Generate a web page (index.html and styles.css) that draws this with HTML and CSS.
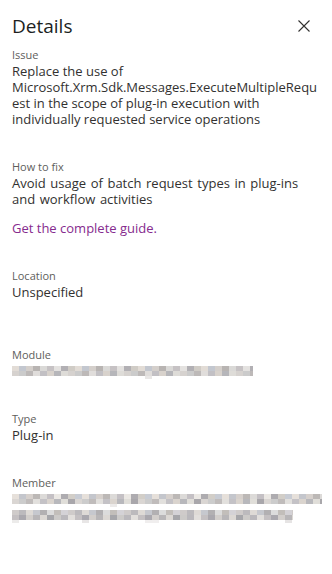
FILE: index.html
```html
<!DOCTYPE html>
<html lang="en">
<head>
<meta charset="utf-8">
<title>Details</title>
<link rel="stylesheet" href="styles.css">
</head>
<body>
<div class="panel">
  <div class="header">
    <h1 class="title">Details</h1>
    <button class="close" aria-label="Close">
      <svg width="12" height="12" viewBox="0 0 12 12"><path d="M0.5 0.5 L11.5 11.5 M11.5 0.5 L0.5 11.5" stroke="#323130" stroke-width="1.1" fill="none"/></svg>
    </button>
  </div>
  <div class="section first">
    <div class="label">Issue</div>
    <div class="value">Replace the use of Microsoft.Xrm.Sdk.Messages.ExecuteMultipleRequest in the scope of plug-in execution with individually requested service operations</div>
  </div>
  <div class="section">
    <div class="label">How to fix</div>
    <div class="value fix">Avoid usage of batch request types in plug-ins and workflow activities</div>
    <a class="link" href="#">Get the complete guide.</a>
  </div>
  <div class="section">
    <div class="label">Location</div>
    <div class="value">Unspecified</div>
  </div>
  <div class="section wide">
    <div class="label">Module</div>
    <div class="value"><div class="mosaic m-module"></div></div>
  </div>
  <div class="section">
    <div class="label">Type</div>
    <div class="value">Plug-in</div>
  </div>
  <div class="section">
    <div class="label">Member</div>
    <div class="value">
      <div class="mosaic m-member1"></div>
      <div class="mosaic m-member2"></div>
    </div>
  </div>
</div>
</body>
</html>
```

FILE: styles.css
```css
html, body {
  margin: 0;
  padding: 0;
  background: #ffffff;
}
body {
  font-family: "Open Sans", "Noto Sans", sans-serif;
  color: #323130;
}
.panel {
  width: 332px;
  padding: 12px 0 0 12px;
  box-sizing: border-box;
}
.header {
  display: flex;
  align-items: center;
  justify-content: space-between;
  height: 28px;
  padding-right: 22px;
}
.title {
  margin: 0;
  font-size: 19px;
  font-weight: 400;
  line-height: 28px;
  color: #201f1e;
}
.close {
  border: 0;
  background: none;
  padding: 0;
  width: 12px;
  height: 12px;
  display: flex;
}
.section {
  margin-top: 32px;
  padding-right: 14px;
}
.section.first {
  margin-top: 7px;
}
.section.wide {
  margin-top: 47px;
}
.label {
  font-size: 11px;
  line-height: 16px;
  color: #605e5c;
}
.value {
  font-size: 13px;
  line-height: 16px;
  color: #323130;
  overflow-wrap: anywhere;
}
.value.fix {
  word-spacing: 1.2px;
}
.link {
  display: block;
  margin-top: 13px;
  font-size: 13px;
  line-height: 16px;
  color: #862b8e;
  text-decoration: none;
}
.mosaic {
  height: 16px;
  background-repeat: no-repeat;
  background-size: 100% 5px, 100% 5px, 100% 5px;
  background-position: 0 3px, 0 8px, 0 13px;
}
.m-module {
  width: 241px;
  background-image:
    repeating-linear-gradient(90deg, #e2dcd6 0 7px, #c3c7cf 7px 14px, #d4cfcb 14px 21px, #b8b4b2 21px 28px, #dad9d7 28px 35px, #c6c2c4 35px 42px, #e4e2e0 42px 49px, #b2b0b4 49px 56px, #d0ccc6 56px 63px),
    repeating-linear-gradient(90deg, #d6d2cf 0 7px, #cbcbcb 7px 14px, #bdb9b8 14px 21px, #e0dddb 21px 28px, #c2c0c4 28px 35px, #d8d2cc 35px 42px, #b6b6ba 42px 49px, #dedcd8 49px 56px),
    linear-gradient(90deg, transparent 0 133px, #e9e7e6 133px 140px, transparent 140px 296px, #e4e2e2 296px 303px, transparent 303px);
}
.m-member1 {
  width: 310px;
  background-image:
    repeating-linear-gradient(90deg, #e6e0da 0 7px, #c4c6cc 7px 14px, #d6d0cc 14px 21px, #bcb8b6 21px 28px, #dcdad8 28px 35px, #c4c0c4 35px 42px, #ebe8e4 42px 49px, #aeacb0 49px 56px, #d2cec8 56px 63px, #c8ccd4 63px 70px),
    repeating-linear-gradient(90deg, #dad6d3 0 7px, #cccccc 7px 14px, #c0bcbb 14px 21px, #e2e0dd 21px 28px, #c4c2c6 28px 35px, #dad4ce 35px 42px, #b8b8bc 42px 49px, #e0ded9 49px 56px, #a9a7ab 56px 63px),
    linear-gradient(90deg, transparent 0 98px, #eceae9 98px 105px, transparent 105px);
}
.m-member2 {
  width: 281px;
  background-image:
    repeating-linear-gradient(90deg, #cfcbca 0 7px, #bcbabd 7px 14px, #dedad6 14px 21px, #c6c8ce 21px 28px, #b2b0b2 28px 35px, #dcdcdc 35px 42px, #c2beba 42px 49px, #d4d2d6 49px 56px),
    repeating-linear-gradient(90deg, #c4c0c2 0 7px, #aaa8ae 7px 14px, #d2cecb 14px 21px, #b8b6b8 21px 28px, #dcd8d4 28px 35px, #a6a6aa 35px 42px, #cccac8 42px 49px, #bab8bc 49px 56px, #e2dfdc 56px 63px),
    linear-gradient(90deg, #ecebea 0 7px, transparent 7px 70px, #e8e6e6 70px 77px, transparent 77px 133px, #f0eeee 133px 147px, transparent 147px 273px, #e6e4e4 273px 280px, transparent 280px);
}
```
